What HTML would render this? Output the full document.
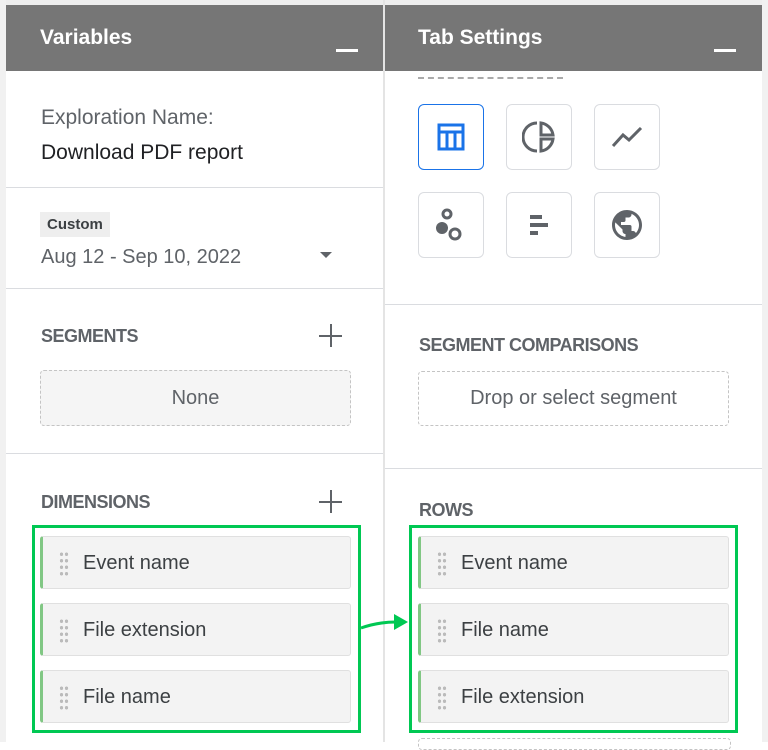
<!DOCTYPE html><html><head><style>
body{margin:0;width:768px;height:742px;background:#fff;position:relative;overflow:hidden;font-family:"Liberation Sans",sans-serif;color:#3c4043}
.a{position:absolute}
.hd{background:#767676;color:#fff;font-weight:bold;font-size:21px;top:5px;height:66px}
.line{background:#dadce0;height:1px}
.lab{font-size:18px;font-weight:bold;color:#5f6368;letter-spacing:-0.5px}
.ib{width:64px;height:64px;border:1px solid #dadce0;border-radius:6px;display:flex;align-items:center;justify-content:center}
.it{background:#f3f3f3;border:1px solid #e0e0e0;border-left:3px solid #81c784;border-radius:3px;height:53px;width:311px;font-size:20px;color:#3c4043;display:flex;align-items:center;box-sizing:border-box;padding-top:2px}
.dots{width:10px;height:26px;margin:0 14px 0 16px;background-image:radial-gradient(circle,#bbb 1.6px,transparent 1.8px);background-size:5px 6.5px}
.gb{border:3px solid #00c853;box-sizing:border-box}
.dash{border:1px dashed #c4c4c4;border-radius:4px;box-sizing:border-box;display:flex;align-items:center;justify-content:center;font-size:20px;color:#5f6368}
</style></head><body>
<div class="a" style="left:0;top:0;width:768px;height:5px;background:#eee"></div>
<div class="a" style="left:0;top:0;width:6px;height:742px;background:#f1f1f1"></div>
<div class="a" style="left:762px;top:0;width:6px;height:742px;background:#f1f1f1"></div>
<div class="a" style="left:383px;top:0;width:2px;height:742px;background:#e4e4e4"></div>
<div class="a hd" style="left:6px;width:377px"><span class="a" style="left:34px;top:21px">Variables</span><span class="a" style="left:330px;top:44px;width:22px;height:3px;background:#fff"></span></div>
<div class="a hd" style="left:385px;width:377px"><span class="a" style="left:33px;top:21px">Tab Settings</span><span class="a" style="left:329px;top:44px;width:22px;height:3px;background:#fff"></span></div>
<div class="a" style="left:41px;top:106px;font-size:21px;color:#5f6368">Exploration Name:</div>
<div class="a" style="left:41px;top:141px;font-size:21px;color:#202124">Download PDF report</div>
<div class="a line" style="left:6px;top:187px;width:377px"></div>
<div class="a" style="left:40px;top:212px;background:#eeeeee;font-size:15px;font-weight:bold;padding:4px 7px;color:#3c4043">Custom</div>
<div class="a" style="left:41px;top:246px;font-size:20px;color:#5f6368">Aug 12 - Sep 10, 2022</div>
<div class="a" style="left:320px;top:252px;border-left:6px solid transparent;border-right:6px solid transparent;border-top:6px solid #5f6368"></div>
<div class="a line" style="left:6px;top:288px;width:377px"></div>
<div class="a lab" style="left:41px;top:326px">SEGMENTS</div>
<div class="a" style="left:319px;top:335px;width:23px;height:2px;background:#5f6368"></div><div class="a" style="left:329.5px;top:324px;width:2px;height:23px;background:#5f6368"></div>
<div class="a dash" style="left:40px;top:370px;width:311px;height:56px;background:#f5f5f5">None</div>
<div class="a line" style="left:6px;top:453px;width:377px"></div>
<div class="a lab" style="left:41px;top:492px">DIMENSIONS</div>
<div class="a" style="left:319px;top:501px;width:23px;height:2px;background:#5f6368"></div><div class="a" style="left:329.5px;top:490px;width:2px;height:23px;background:#5f6368"></div>
<div class="a gb" style="left:32px;top:525px;width:329px;height:208px"></div>
<div class="a it" style="left:40px;top:536px"><span class="dots"></span>Event name</div>
<div class="a it" style="left:40px;top:603px"><span class="dots"></span>File extension</div>
<div class="a it" style="left:40px;top:670px"><span class="dots"></span>File name</div>
<svg class="a" style="left:358px;top:610px" width="52" height="24"><path d="M3 18 Q20 12 38 12" stroke="#00c853" stroke-width="3" fill="none"/><path d="M36 4 L50 12 L36 20Z" fill="#00c853"/></svg>
<div class="a" style="left:418px;top:77px;width:145px;border-top:2px dashed #aaa"></div>
<div class="a ib" style="left:418px;top:104px;border-color:#1a73e8"><svg width="30" height="30" viewBox="0 0 30 30"><rect x="3" y="3" width="24" height="24" fill="none" stroke="#1a73e8" stroke-width="3"/><path d="M3 10H27M11 10V27M19 10V27" stroke="#1a73e8" stroke-width="3"/></svg></div>
<div class="a ib" style="left:506px;top:104px"><svg width="34" height="34" viewBox="0 0 34 34" fill="none" stroke="#5f6368" stroke-width="3"><path d="M15 3A14 14 0 0 0 15 31"/><path d="M19 3A14 14 0 0 1 31 15H19Z"/><path d="M19 31A14 14 0 0 0 31 19H19Z"/></svg></div>
<div class="a ib" style="left:594px;top:104px"><svg width="34" height="34" viewBox="0 0 34 34" fill="none" stroke="#5f6368" stroke-width="3"><path d="M3 26L13 15L19 20L31 8"/></svg></div>
<div class="a ib" style="left:418px;top:192px"><svg width="34" height="34" viewBox="0 0 34 34" fill="#5f6368"><circle cx="13" cy="6" r="4" fill="none" stroke="#5f6368" stroke-width="3"/><circle cx="8" cy="20" r="6"/><circle cx="21" cy="26" r="5" fill="none" stroke="#5f6368" stroke-width="3"/></svg></div>
<div class="a ib" style="left:506px;top:192px"><svg width="30" height="30" viewBox="0 0 30 30" fill="#5f6368"><rect x="6" y="5" width="12" height="4"/><rect x="6" y="13" width="18" height="4"/><rect x="6" y="21" width="8" height="4"/></svg></div>
<div class="a ib" style="left:594px;top:192px"><svg width="36" height="36" viewBox="0 0 24 24"><path fill="#5f6368" d="M12 2C6.48 2 2 6.480 2 12s4.48 10 10 10 10-4.48 10-10S17.52 2 12 2zm-1 17.93c-3.95-.49-7-3.850-7-7.93 0-.62.08-1.21.21-1.79L9 15v1c0 1.1.9 2 2 2v1.93zm6.9-2.54c-.26-.81-1-1.39-1.9-1.39h-1v-3c0-.55-.45-1-1-1H8v-2h2c.55 0 1-.45 1-1V7h2c1.1 0 2-.9 2-2v-.41c2.93 1.19 5 4.06 5 7.41 0 2.080-.8 3.970-2.1 5.39z"/></svg></div>
<div class="a line" style="left:385px;top:304px;width:377px"></div>
<div class="a lab" style="left:419px;top:335px">SEGMENT COMPARISONS</div>
<div class="a dash" style="left:418px;top:371px;width:311px;height:55px">Drop or select segment</div>
<div class="a line" style="left:385px;top:468px;width:377px"></div>
<div class="a lab" style="left:419px;top:500px">ROWS</div>
<div class="a gb" style="left:409px;top:525px;width:329px;height:208px"></div>
<div class="a it" style="left:418px;top:536px"><span class="dots"></span>Event name</div>
<div class="a it" style="left:418px;top:603px"><span class="dots"></span>File name</div>
<div class="a it" style="left:418px;top:670px"><span class="dots"></span>File extension</div>
<div class="a" style="left:418px;top:738px;width:311px;height:10px;border:1px dashed #c4c4c4;border-radius:4px"></div>
</body></html>
